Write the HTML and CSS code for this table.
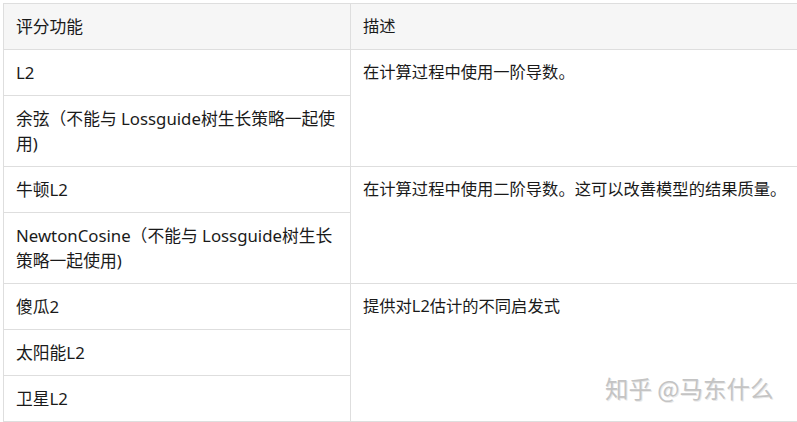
FILE: index.html
```html
<!DOCTYPE html>
<html lang="zh-CN">
<head>
<meta charset="utf-8">
<title>评分功能</title>
<link rel="stylesheet" href="styles.css">
</head>
<body>
<div class="page">
  <table class="grid">
    <colgroup>
      <col class="c1">
      <col class="c2">
    </colgroup>
    <thead>
      <tr><th>评分功能</th><th class="desc">描述</th></tr>
    </thead>
    <tbody>
      <tr><td>L2</td><td class="desc" rowspan="2">在计算过程中使用一阶导数。</td></tr>
      <tr><td>余弦（不能与 Lossguide树生长策略一起使用)</td></tr>
      <tr><td>牛顿L2</td><td class="desc" rowspan="2">在计算过程中使用二阶导数。这可以改善模型的结果质量。</td></tr>
      <tr><td>NewtonCosine（不能与 Lossguide树生长策略一起使用)</td></tr>
      <tr><td>傻瓜2</td><td class="desc" rowspan="3">提供对L2估计的不同启发式</td></tr>
      <tr><td>太阳能L2</td></tr>
      <tr><td>卫星L2</td></tr>
    </tbody>
  </table>
  <div class="watermark">知乎 @马东什么</div>
</div>
</body>
</html>
```
FILE: styles.css
```css
html, body {
  margin: 0;
  padding: 0;
  background: #ffffff;
  overflow: hidden;
}
.page {
  position: relative;
  width: 797px;
  height: 422px;
  overflow: hidden;
}
.grid {
  margin: 3px 0 0 3px;
  border-collapse: collapse;
  table-layout: fixed;
  width: 797px;
  font-family: "Noto Sans", "Noto Sans CJK SC", sans-serif;
  font-size: 16.8px;
  line-height: 25px;
  color: #1a1a1a;
}
.c1 { width: 347px; }
.c2 { width: 450px; }
.grid th,
.grid td {
  border: 1px solid #dedede;
  padding: 10px 12px;
  text-align: left;
  vertical-align: top;
  font-weight: 400;
}
.grid .desc {
  padding-right: 2px;
  font-size: 16.3px;
}
.grid th {
  background: #f6f6f6;
}
.watermark {
  position: absolute;
  left: 605px;
  top: 373px;
  font-family: "Noto Sans CJK SC", sans-serif;
  font-size: 23.5px;
  line-height: 30px;
  color: #c4c4c4;
  text-shadow: 1px 1px 0 #e9e9e9;
  white-space: nowrap;
}
```
